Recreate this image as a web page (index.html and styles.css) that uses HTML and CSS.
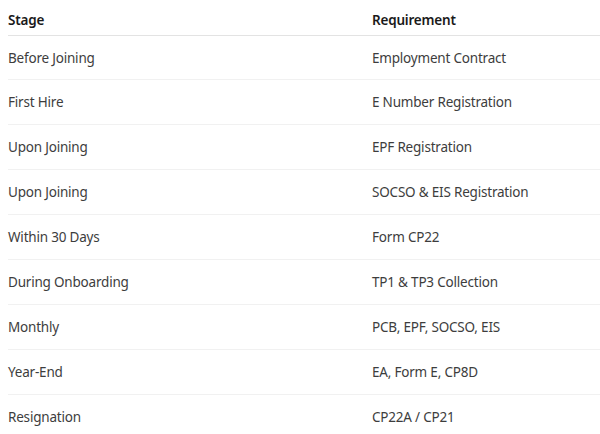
FILE: index.html
```html
<!DOCTYPE html>
<html>
<head>
<meta charset="utf-8">
<link rel="stylesheet" href="styles.css">
</head>
<body>
<table class="tbl">
  <thead>
    <tr><th>Stage</th><th>Requirement</th></tr>
  </thead>
  <tbody>
    <tr><td>Before Joining</td><td>Employment Contract</td></tr>
    <tr><td>First Hire</td><td>E Number Registration</td></tr>
    <tr><td>Upon Joining</td><td>EPF Registration</td></tr>
    <tr><td>Upon Joining</td><td>SOCSO &amp; EIS Registration</td></tr>
    <tr><td>Within 30 Days</td><td>Form CP22</td></tr>
    <tr><td>During Onboarding</td><td>TP1 &amp; TP3 Collection</td></tr>
    <tr><td>Monthly</td><td>PCB, EPF, SOCSO, EIS</td></tr>
    <tr><td>Year-End</td><td>EA, Form E, CP8D</td></tr>
    <tr><td>Resignation</td><td>CP22A / CP21</td></tr>
  </tbody>
</table>
</body>
</html>
```
FILE: styles.css
```css
html, body {
  margin: 0;
  padding: 0;
  background: #fff;
  overflow: hidden;
}
body {
  padding-left: 8px;
  font-family: "Noto Sans", "Open Sans", sans-serif;
  font-size: 13.5px;
  letter-spacing: -0.2px;
  line-height: 20px;
  color: #3d3d3d;
}
.tbl {
  border-collapse: collapse;
  width: 600px;
  table-layout: fixed;
}
.tbl th, .tbl td {
  text-align: left;
  padding: 0;
  vertical-align: middle;
}
.tbl th:first-child, .tbl td:first-child {
  width: 364px;
}
.tbl th {
  font-weight: 600;
  color: #1a1a1a;
  padding-top: 10px;
  padding-bottom: 5px;
  border-bottom: 1px solid #e3e3e3;
}
.tbl td {
  padding-top: 12px;
  padding-bottom: 11px;
  border-bottom: 1px solid #f1f1f1;
}
.tbl tbody tr:not(:first-child) td {
  padding-top: 12px;
  padding-bottom: 12px;
}
```
